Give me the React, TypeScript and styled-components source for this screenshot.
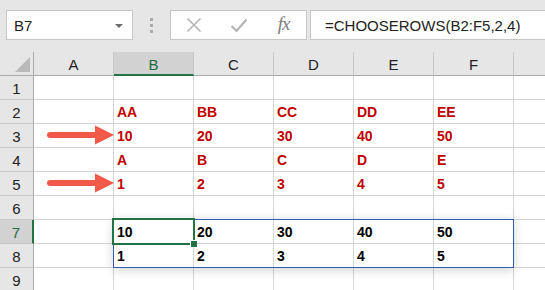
import React from "react";
import styled, { createGlobalStyle } from "styled-components";

const GlobalStyle = createGlobalStyle`
  html, body { margin: 0; padding: 0; background: #ffffff; overflow: hidden; }
  body { font-family: "Liberation Sans", Arial, sans-serif; }
  * { box-sizing: border-box; }
`;

const GREEN = "#217346";

const Page = styled.div`
  width: 545px;
  height: 290px;
  overflow: hidden;
  background: #fff;
`;

const Toolbar = styled.div`
  display: flex;
  align-items: flex-start;
  height: 52px;
  padding: 10px 0 0 6px;
  background: #e6e6e6;
`;

const NameBox = styled.div`
  width: 127px;
  height: 30px;
  background: #fff;
  border: 1px solid #c6c6c6;
  display: flex;
  align-items: center;
  justify-content: space-between;
  padding: 0 9px 0 7px;
  font-size: 15px;
  color: #222;
`;

const Caret = styled.span`
  width: 0;
  height: 0;
  border-left: 4px solid transparent;
  border-right: 4px solid transparent;
  border-top: 4px solid #6b6b6b;
  margin-top: 1px;
`;

const Grip = styled.div`
  width: 37px;
  height: 30px;
  display: flex;
  flex-direction: column;
  align-items: center;
  justify-content: center;
  gap: 3px;
`;

const Dot = styled.span`
  width: 3px;
  height: 3px;
  background: #acacac;
`;

const ButtonsBox = styled.div`
  width: 137px;
  height: 30px;
  background: #fff;
  border: 1px solid #c6c6c6;
  display: flex;
  align-items: center;
`;

const Slot = styled.div`
  width: 45px;
  height: 100%;
  display: flex;
  align-items: center;
  justify-content: center;
`;

const Fx = styled.span`
  font-family: "Liberation Serif", "Times New Roman", serif;
  font-style: italic;
  font-size: 19px;
  color: #7d7d7d;
  letter-spacing: -1px;
  margin-top: -2px;
`;

const FormulaInput = styled.div`
  flex: 1;
  height: 30px;
  margin-left: 3px;
  background: #fff;
  border: 1px solid #c6c6c6;
  border-right: none;
  display: flex;
  align-items: center;
  padding-left: 14px;
  font-size: 15px;
  color: #222;
  white-space: nowrap;
`;

const Sheet = styled.div`
  display: grid;
  grid-template-columns: 34px repeat(6, 80px) 40px;
  grid-auto-rows: 24px;
`;

const Corner = styled.div`
  background: #e6e6e6;
  border-right: 1px solid #ababab;
  border-bottom: 1px solid #ababab;
  position: relative;
`;

const CornerTriangle = styled.div`
  position: absolute;
  right: 3px;
  bottom: 3px;
  width: 0;
  height: 0;
  border-left: 15px solid transparent;
  border-bottom: 15px solid #b9b9b9;
`;

const ColHead = styled.div<{ $selected?: boolean }>`
  background: ${(p) => (p.$selected ? "#d2d2d2" : "#e6e6e6")};
  border-right: 1px solid #c6c6c6;
  border-bottom: ${(p) => (p.$selected ? `2px solid ${GREEN}` : "1px solid #ababab")};
  color: ${(p) => (p.$selected ? "#1c6a40" : "#222")};
  display: flex;
  align-items: center;
  justify-content: center;
  font-size: 15px;
  padding-top: ${(p) => (p.$selected ? "3px" : "2px")};
`;

const RowHead = styled.div<{ $selected?: boolean }>`
  background: ${(p) => (p.$selected ? "#d2d2d2" : "#e6e6e6")};
  border-right: ${(p) => (p.$selected ? `2px solid ${GREEN}` : "1px solid #ababab")};
  border-bottom: 1px solid #c6c6c6;
  color: ${(p) => (p.$selected ? "#1c6a40" : "#222")};
  display: flex;
  align-items: center;
  justify-content: center;
  font-size: 15px;
  padding-top: 1px;
`;

const Cell = styled.div<{ $red?: boolean }>`
  position: relative;
  border-right: 1px solid #d4d4d4;
  border-bottom: 1px solid #d4d4d4;
  display: flex;
  align-items: center;
  padding: 1px 0 0 3px;
  font-weight: bold;
  font-size: 14px;
  color: ${(p) => (p.$red ? "#c00000" : "#000")};
  white-space: nowrap;
`;

const ArrowCell = styled(Cell)`
  justify-content: flex-end;
  padding: 0;
  overflow: visible;
`;

const Arrow = styled.svg`
  display: block;
  margin-right: -1px;
  margin-top: -1px;
  flex-shrink: 0;
`;

/* Range selection overlay B7:F8, anchored to the active cell */
const Selection = styled.div`
  position: absolute;
  left: -1px;
  top: -1px;
  width: 401px;
  height: 49px;
  border: 1px solid #2f5eb1;
  box-shadow: 0 2px 10px rgba(0, 0, 0, 0.18);
  pointer-events: none;
  z-index: 1;
`;

const ActiveBorder = styled.div`
  position: absolute;
  left: -2px;
  top: -2px;
  width: 83px;
  height: 27px;
  border: 2px solid ${GREEN};
  pointer-events: none;
  z-index: 2;
`;

const FillHandle = styled.div`
  position: absolute;
  right: -4px;
  bottom: -4px;
  width: 7px;
  height: 7px;
  background: ${GREEN};
  border-left: 1px solid #fff;
  border-top: 1px solid #fff;
`;

const COLS = ["A", "B", "C", "D", "E", "F", ""];

const DATA: Record<number, { values: string[]; red: boolean; arrow?: boolean }> = {
  2: { values: ["AA", "BB", "CC", "DD", "EE"], red: true },
  3: { values: ["10", "20", "30", "40", "50"], red: true, arrow: true },
  4: { values: ["A", "B", "C", "D", "E"], red: true },
  5: { values: ["1", "2", "3", "4", "5"], red: true, arrow: true },
  7: { values: ["10", "20", "30", "40", "50"], red: false },
  8: { values: ["1", "2", "3", "4", "5"], red: false },
};

const RedArrow = () => (
  <Arrow width="67" height="20" viewBox="0 0 67 20">
    <line x1="3" y1="10" x2="52" y2="10" stroke="#f15a4a" strokeWidth="6" strokeLinecap="round" />
    <polygon points="48,0.5 67,10 48,19.5" fill="#f15a4a" />
  </Arrow>
);

export default function App() {
  const rows = [1, 2, 3, 4, 5, 6, 7, 8, 9];
  return (
    <Page>
      <GlobalStyle />
      <Toolbar>
        <NameBox>
          <span>B7</span>
          <Caret />
        </NameBox>
        <Grip>
          <Dot />
          <Dot />
          <Dot />
        </Grip>
        <ButtonsBox>
          <Slot>
            <svg width="16" height="16" viewBox="0 0 16 16">
              <path d="M1.5 1.5 L14.5 14.5 M14.5 1.5 L1.5 14.5" stroke="#b4b4b4" strokeWidth="1.6" fill="none" />
            </svg>
          </Slot>
          <Slot>
            <svg width="18" height="15" viewBox="0 0 18 15">
              <path d="M1.5 8 L6.5 13 L16.5 1.5" stroke="#b4b4b4" strokeWidth="2.2" fill="none" />
            </svg>
          </Slot>
          <Slot>
            <Fx>fx</Fx>
          </Slot>
        </ButtonsBox>
        <FormulaInput>=CHOOSEROWS(B2:F5,2,4)</FormulaInput>
      </Toolbar>
      <Sheet>
        <Corner>
          <CornerTriangle />
        </Corner>
        {COLS.map((c, i) => (
          <ColHead key={"h" + i} $selected={c === "B"}>
            {c}
          </ColHead>
        ))}
        {rows.map((r) => {
          const d = DATA[r];
          return (
            <React.Fragment key={r}>
              <RowHead $selected={r === 7}>{r}</RowHead>
              {d?.arrow ? (
                <ArrowCell>
                  <RedArrow />
                </ArrowCell>
              ) : (
                <Cell />
              )}
              {[0, 1, 2, 3, 4].map((k) => (
                <Cell key={k} $red={d?.red}>
                  {d ? d.values[k] : ""}
                  {r === 7 && k === 0 && (
                    <>
                      <Selection />
                      <ActiveBorder>
                        <FillHandle />
                      </ActiveBorder>
                    </>
                  )}
                </Cell>
              ))}
              <Cell />
            </React.Fragment>
          );
        })}
      </Sheet>
    </Page>
  );
}
